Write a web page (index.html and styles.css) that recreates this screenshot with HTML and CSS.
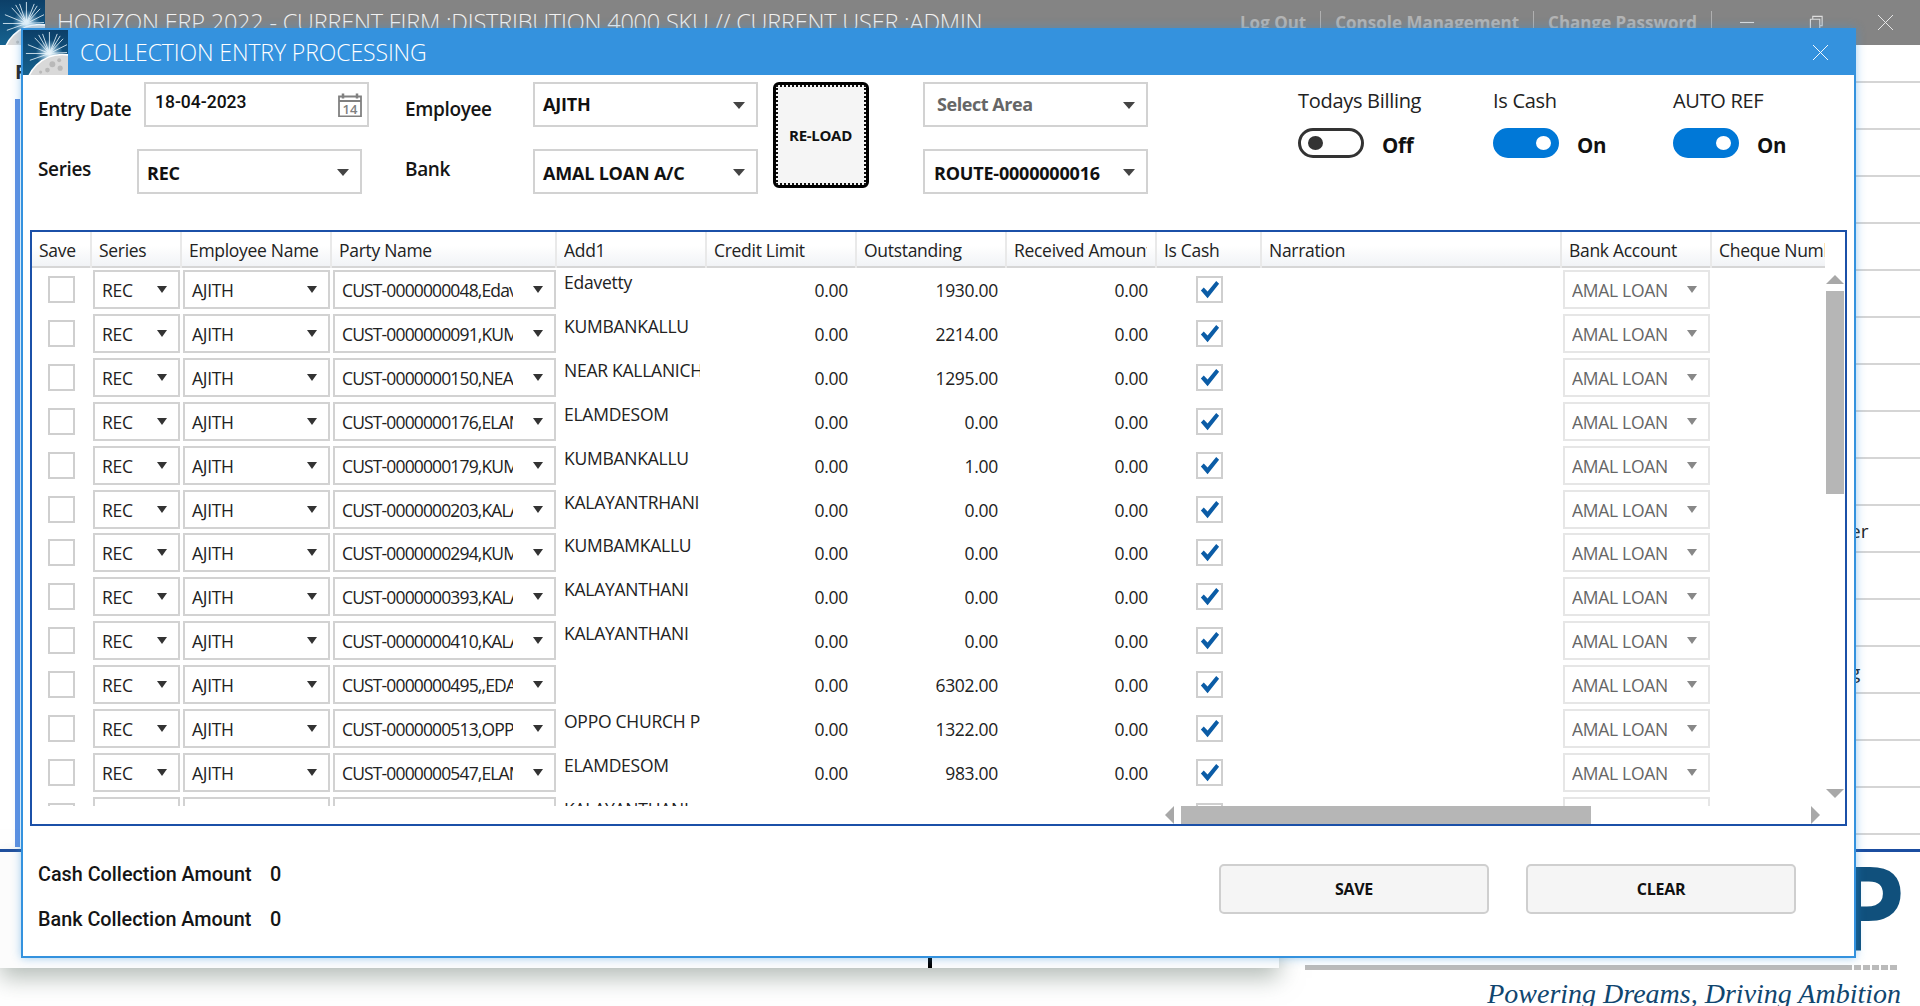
FILE: index.html
```html
<!DOCTYPE html>
<html lang="en">
<head>
<meta charset="utf-8">
<title>Collection Entry Processing</title>
<link rel="stylesheet" href="styles.css">
</head>
<body>
<svg class="sprite" width="0" height="0" aria-hidden="true">
  <defs>
    <linearGradient id="skyGrad" x1="0" y1="0" x2="0" y2="1"><stop offset="0" stop-color="#0c3f68"/><stop offset="1" stop-color="#16628f"/></linearGradient>
    <radialGradient id="glowGrad"><stop offset="0" stop-color="#fff"/><stop offset=".3" stop-color="#d6ecf8" stop-opacity=".85"/><stop offset="1" stop-color="#7fb9dc" stop-opacity="0"/></radialGradient>
    <symbol id="logo" viewBox="0 0 46 46">
      <rect width="46" height="46" fill="url(#skyGrad)"/>
      <circle cx="27" cy="24" r="14" fill="url(#glowGrad)"/>
      <g stroke="#e8f5fc" stroke-width=".9" opacity=".95">
        <path d="M27 24L27 2M27 24L20 4M27 24L35 4M27 24L12 8M27 24L41 9M27 24L5 15M27 24L45 15M27 24L3 24M27 24L45 23M27 24L7 31M27 24L16 5M27 24L38 6"/>
      </g>
      <circle cx="40" cy="62" r="37" fill="#d9d9d9" stroke="#fff" stroke-width="1.6"/>
      <g fill="#b9b9b9"><circle cx="30" cy="35" r="3"/><circle cx="37" cy="31" r="2"/><circle cx="25" cy="41" r="2.4"/><circle cx="38" cy="39" r="2.6"/><circle cx="18" cy="43" r="1.6"/></g>
    </symbol>
    <symbol id="tick" viewBox="0 0 24 24">
      <path d="M3 13l3-3 4 4 9-11 3 3-12 15z" fill="#0b5ca6"/>
    </symbol>
  </defs>
</svg>

<div class="desktop">
  <div class="backdrop">
    <header class="appbar">
      <svg class="appbar-logo"><use href="#logo"/></svg>
      <div class="appbar-title">HORIZON ERP 2022 - CURRENT FIRM :DISTRIBUTION 4000 SKU // CURRENT USER :ADMIN</div>
      <nav class="appbar-links">
        <span class="appbar-link">Log Out</span>
        <span class="appbar-link">Console Management</span>
        <span class="appbar-link">Change Password</span>
      </nav>
      <div class="winctl">
        <svg class="winctl-icon" viewBox="0 0 16 16"><path d="M0 8h15" stroke="#ddd" stroke-width="1.2" fill="none"/></svg>
        <svg class="winctl-icon" viewBox="0 0 16 16"><path d="M1.5 4.5h10v11h-10zM4 4.500V1.500h10v10h-2.500" stroke="#ddd" stroke-width="1.200" fill="none"/></svg>
        <svg class="winctl-icon" viewBox="0 0 16 16"><path d="M0 0l16 16M16 0L0 16" stroke="#eee" stroke-width="1" fill="none"/></svg>
      </div>
    </header>
    <div class="workspace">
      <div class="workspace-main">
        <div class="stub-letter">F</div>
        <div class="stub-panel"></div>
      </div>
      <ul class="sidelist">
        <li></li><li></li><li></li><li></li><li></li><li></li><li></li><li></li><li></li><li></li>
        <li class="sidelist-text">er</li><li></li><li></li><li class="sidelist-text">g</li><li></li><li></li><li></li>
      </ul>
    </div>
    <div class="bottom">
      <div class="bottom-panel"><span class="bottom-tick"></span></div>
      <div class="brand">
        <div class="brand-letter">P</div>
        <div class="brand-rule"></div>
        <div class="brand-tag">Powering Dreams, Driving Ambition</div>
      </div>
    </div>
  </div>

  <section class="dialog">
    <header class="dialog-title">
      <svg class="dialog-logo"><use href="#logo"/></svg>
      <h1 class="dialog-heading">COLLECTION ENTRY PROCESSING</h1>
      <svg class="dialog-close" viewBox="0 0 16 16"><path d="M0 0l16 16M16 0L0 16" stroke="#fff" stroke-width="1" fill="none"/></svg>
    </header>

    <div class="form">
      <div class="fcol fcol-a">
        <div class="frow">
          <label class="flabel flabel-low flabel-date">Entry Date</label>
          <div class="field field-date">
            <span class="date-text">18-04-2023</span>
            <svg class="cal" viewBox="0 0 24 24">
              <path d="M1 4h22v20H1zM1 8.500h22" fill="none" stroke="#808080" stroke-width="1.800"/>
              <path d="M5 1v5M19 1v5" stroke="#808080" stroke-width="2.500"/>
              <text class="cal-num" x="12" y="21.500" text-anchor="middle">14</text>
            </svg>
          </div>
        </div>
        <div class="frow">
          <label class="flabel flabel-high flabel-series">Series</label>
          <div class="field field-combo">REC</div>
        </div>
      </div>
      <div class="fcol fcol-b">
        <div class="frow">
          <label class="flabel flabel-low flabel-wide">Employee</label>
          <div class="field field-combo field-raised">AJITH</div>
        </div>
        <div class="frow">
          <label class="flabel flabel-high flabel-wide">Bank</label>
          <div class="field field-combo">AMAL LOAN A/C</div>
        </div>
      </div>
      <button class="reload" type="button"><span class="reload-inner">RE-LOAD</span></button>
      <div class="fcol fcol-d">
        <div class="field field-combo field-raised field-muted">Select Area</div>
        <div class="field field-combo field-tight">ROUTE-0000000016</div>
      </div>
      <div class="switch switch-a">
        <div class="switch-label">Todays Billing</div>
        <div class="switch-line"><span class="toggle"></span><span class="switch-state">Off</span></div>
      </div>
      <div class="switch switch-b">
        <div class="switch-label">Is Cash</div>
        <div class="switch-line"><span class="toggle toggle-on"></span><span class="switch-state">On</span></div>
      </div>
      <div class="switch">
        <div class="switch-label">AUTO REF</div>
        <div class="switch-line"><span class="toggle toggle-on"></span><span class="switch-state">On</span></div>
      </div>
    </div>

    <div class="grid">
      <div class="gcols ghead">
        <div class="gh">Save</div><div class="gh">Series</div><div class="gh">Employee Name</div><div class="gh">Party Name</div><div class="gh">Add1</div><div class="gh">Credit Limit</div><div class="gh">Outstanding</div><div class="gh">Received Amount</div><div class="gh">Is Cash</div><div class="gh">Narration</div><div class="gh">Bank Account</div><div class="gh">Cheque Number</div>
      </div>
      <div class="gbody">
        <div class="gcols grow"><div class="gc"><span class="box"></span></div><div class="gc"><div class="cb">REC</div></div><div class="gc"><div class="cb">AJITH</div></div><div class="gc"><div class="cb"><span class="cb-clip">CUST-0000000048,Edavetty</span></div></div><div class="gc gc-add">Edavetty</div><div class="gc gc-num">0.00</div><div class="gc gc-num">1930.00</div><div class="gc gc-num">0.00</div><div class="gc"><span class="box box-cash"><svg class="tick"><use href="#tick"/></svg></span></div><div class="gc"></div><div class="gc"><div class="cb cb-off"><span class="cb-fade">AMAL LOAN A/C</span></div></div><div class="gc"></div></div>
        <div class="gcols grow"><div class="gc"><span class="box"></span></div><div class="gc"><div class="cb">REC</div></div><div class="gc"><div class="cb">AJITH</div></div><div class="gc"><div class="cb"><span class="cb-clip">CUST-0000000091,KUMBANKALLU</span></div></div><div class="gc gc-add">KUMBANKALLU</div><div class="gc gc-num">0.00</div><div class="gc gc-num">2214.00</div><div class="gc gc-num">0.00</div><div class="gc"><span class="box box-cash"><svg class="tick"><use href="#tick"/></svg></span></div><div class="gc"></div><div class="gc"><div class="cb cb-off"><span class="cb-fade">AMAL LOAN A/C</span></div></div><div class="gc"></div></div>
        <div class="gcols grow"><div class="gc"><span class="box"></span></div><div class="gc"><div class="cb">REC</div></div><div class="gc"><div class="cb">AJITH</div></div><div class="gc"><div class="cb"><span class="cb-clip">CUST-0000000150,NEAR KALLANICHIRA</span></div></div><div class="gc gc-add">NEAR KALLANICHIRA</div><div class="gc gc-num">0.00</div><div class="gc gc-num">1295.00</div><div class="gc gc-num">0.00</div><div class="gc"><span class="box box-cash"><svg class="tick"><use href="#tick"/></svg></span></div><div class="gc"></div><div class="gc"><div class="cb cb-off"><span class="cb-fade">AMAL LOAN A/C</span></div></div><div class="gc"></div></div>
        <div class="gcols grow"><div class="gc"><span class="box"></span></div><div class="gc"><div class="cb">REC</div></div><div class="gc"><div class="cb">AJITH</div></div><div class="gc"><div class="cb"><span class="cb-clip">CUST-0000000176,ELAMDESOM</span></div></div><div class="gc gc-add">ELAMDESOM</div><div class="gc gc-num">0.00</div><div class="gc gc-num">0.00</div><div class="gc gc-num">0.00</div><div class="gc"><span class="box box-cash"><svg class="tick"><use href="#tick"/></svg></span></div><div class="gc"></div><div class="gc"><div class="cb cb-off"><span class="cb-fade">AMAL LOAN A/C</span></div></div><div class="gc"></div></div>
        <div class="gcols grow"><div class="gc"><span class="box"></span></div><div class="gc"><div class="cb">REC</div></div><div class="gc"><div class="cb">AJITH</div></div><div class="gc"><div class="cb"><span class="cb-clip">CUST-0000000179,KUMBANKALLU</span></div></div><div class="gc gc-add">KUMBANKALLU</div><div class="gc gc-num">0.00</div><div class="gc gc-num">1.00</div><div class="gc gc-num">0.00</div><div class="gc"><span class="box box-cash"><svg class="tick"><use href="#tick"/></svg></span></div><div class="gc"></div><div class="gc"><div class="cb cb-off"><span class="cb-fade">AMAL LOAN A/C</span></div></div><div class="gc"></div></div>
        <div class="gcols grow"><div class="gc"><span class="box"></span></div><div class="gc"><div class="cb">REC</div></div><div class="gc"><div class="cb">AJITH</div></div><div class="gc"><div class="cb"><span class="cb-clip">CUST-0000000203,KALAYANTRHANI</span></div></div><div class="gc gc-add">KALAYANTRHANI</div><div class="gc gc-num">0.00</div><div class="gc gc-num">0.00</div><div class="gc gc-num">0.00</div><div class="gc"><span class="box box-cash"><svg class="tick"><use href="#tick"/></svg></span></div><div class="gc"></div><div class="gc"><div class="cb cb-off"><span class="cb-fade">AMAL LOAN A/C</span></div></div><div class="gc"></div></div>
        <div class="gcols grow"><div class="gc"><span class="box"></span></div><div class="gc"><div class="cb">REC</div></div><div class="gc"><div class="cb">AJITH</div></div><div class="gc"><div class="cb"><span class="cb-clip">CUST-0000000294,KUMBAMKALLU</span></div></div><div class="gc gc-add">KUMBAMKALLU</div><div class="gc gc-num">0.00</div><div class="gc gc-num">0.00</div><div class="gc gc-num">0.00</div><div class="gc"><span class="box box-cash"><svg class="tick"><use href="#tick"/></svg></span></div><div class="gc"></div><div class="gc"><div class="cb cb-off"><span class="cb-fade">AMAL LOAN A/C</span></div></div><div class="gc"></div></div>
        <div class="gcols grow"><div class="gc"><span class="box"></span></div><div class="gc"><div class="cb">REC</div></div><div class="gc"><div class="cb">AJITH</div></div><div class="gc"><div class="cb"><span class="cb-clip">CUST-0000000393,KALAYANTHANI</span></div></div><div class="gc gc-add">KALAYANTHANI</div><div class="gc gc-num">0.00</div><div class="gc gc-num">0.00</div><div class="gc gc-num">0.00</div><div class="gc"><span class="box box-cash"><svg class="tick"><use href="#tick"/></svg></span></div><div class="gc"></div><div class="gc"><div class="cb cb-off"><span class="cb-fade">AMAL LOAN A/C</span></div></div><div class="gc"></div></div>
        <div class="gcols grow"><div class="gc"><span class="box"></span></div><div class="gc"><div class="cb">REC</div></div><div class="gc"><div class="cb">AJITH</div></div><div class="gc"><div class="cb"><span class="cb-clip">CUST-0000000410,KALAYANTHANI</span></div></div><div class="gc gc-add">KALAYANTHANI</div><div class="gc gc-num">0.00</div><div class="gc gc-num">0.00</div><div class="gc gc-num">0.00</div><div class="gc"><span class="box box-cash"><svg class="tick"><use href="#tick"/></svg></span></div><div class="gc"></div><div class="gc"><div class="cb cb-off"><span class="cb-fade">AMAL LOAN A/C</span></div></div><div class="gc"></div></div>
        <div class="gcols grow"><div class="gc"><span class="box"></span></div><div class="gc"><div class="cb">REC</div></div><div class="gc"><div class="cb">AJITH</div></div><div class="gc"><div class="cb"><span class="cb-clip">CUST-0000000495,,EDAVETTY</span></div></div><div class="gc gc-add"></div><div class="gc gc-num">0.00</div><div class="gc gc-num">6302.00</div><div class="gc gc-num">0.00</div><div class="gc"><span class="box box-cash"><svg class="tick"><use href="#tick"/></svg></span></div><div class="gc"></div><div class="gc"><div class="cb cb-off"><span class="cb-fade">AMAL LOAN A/C</span></div></div><div class="gc"></div></div>
        <div class="gcols grow"><div class="gc"><span class="box"></span></div><div class="gc"><div class="cb">REC</div></div><div class="gc"><div class="cb">AJITH</div></div><div class="gc"><div class="cb"><span class="cb-clip">CUST-0000000513,OPPO CHURCH</span></div></div><div class="gc gc-add">OPPO CHURCH PARA</div><div class="gc gc-num">0.00</div><div class="gc gc-num">1322.00</div><div class="gc gc-num">0.00</div><div class="gc"><span class="box box-cash"><svg class="tick"><use href="#tick"/></svg></span></div><div class="gc"></div><div class="gc"><div class="cb cb-off"><span class="cb-fade">AMAL LOAN A/C</span></div></div><div class="gc"></div></div>
        <div class="gcols grow"><div class="gc"><span class="box"></span></div><div class="gc"><div class="cb">REC</div></div><div class="gc"><div class="cb">AJITH</div></div><div class="gc"><div class="cb"><span class="cb-clip">CUST-0000000547,ELAMDESOM</span></div></div><div class="gc gc-add">ELAMDESOM</div><div class="gc gc-num">0.00</div><div class="gc gc-num">983.00</div><div class="gc gc-num">0.00</div><div class="gc"><span class="box box-cash"><svg class="tick"><use href="#tick"/></svg></span></div><div class="gc"></div><div class="gc"><div class="cb cb-off"><span class="cb-fade">AMAL LOAN A/C</span></div></div><div class="gc"></div></div>
        <div class="gcols grow"><div class="gc"><span class="box"></span></div><div class="gc"><div class="cb"></div></div><div class="gc"><div class="cb"></div></div><div class="gc"><div class="cb"></div></div><div class="gc gc-add">KALAYANTHANI</div><div class="gc gc-num"></div><div class="gc gc-num"></div><div class="gc gc-num"></div><div class="gc"><span class="box box-cash"></span></div><div class="gc"></div><div class="gc"><div class="cb cb-off"></div></div><div class="gc"></div></div>
      </div>
      <div class="vscroll"><span class="arrow arrow-up"></span><span class="vthumb"></span><span class="arrow arrow-down"></span></div>
      <div class="hscroll"><span class="arrow arrow-left"></span><span class="hthumb"></span><span class="arrow arrow-right"></span></div>
    </div>

    <footer class="summary">
      <div class="totals">
        <div class="total"><span class="total-label">Cash Collection Amount</span><span class="total-value">0</span></div>
        <div class="total"><span class="total-label">Bank Collection Amount</span><span class="total-value">0</span></div>
      </div>
      <div class="actions">
        <button class="action" type="button">SAVE</button>
        <button class="action" type="button">CLEAR</button>
      </div>
    </footer>
  </section>
</div>
</body>
</html>
```
FILE: styles.css
```css
* { box-sizing: border-box; }
html, body { margin: 0; padding: 0; background: #fff; }
body { font-family: "Open Sans", "Noto Sans", sans-serif; color: #111; overflow: hidden; }
.sprite { position: absolute; }

.desktop { position: relative; width: 1920px; height: 1006px; overflow: hidden; background: #fff; }
.backdrop { display: flex; flex-direction: column; height: 1006px; }

/* background application */
.appbar { display: flex; height: 45px; background: #848484; flex: none; }
.appbar-logo { width: 45px; height: 45px; flex: none; }
.appbar-title { margin-left: 12px; width: 1100px; font-size: 23.5px; font-weight: 300; line-height: 44px; color: #f2f2f2; white-space: nowrap; letter-spacing: -.2px; }
.appbar-links { display: flex; margin-left: 69px; padding-top: 11px; }
.appbar-link { padding: 0 14px; height: 24px; line-height: 24px; font-size: 17px; font-weight: 700; color: #b4b4b4; border-right: 1px solid #b0b0b0; white-space: nowrap; }
.winctl { display: flex; flex: none; margin-left: auto; padding-top: 15px; padding-right: 27px; gap: 54px; }
.winctl-icon { width: 15px; height: 15px; }

.workspace { display: flex; flex: none; height: 807px; justify-content: space-between; border-bottom: 3px solid #1b4da0; }
.workspace-main { width: 22px; position: relative; padding-left: 15px; }
.stub-letter { height: 54px; padding-top: 17px; font-size: 20px; line-height: 20px; font-weight: 700; color: #222; }
.stub-panel { width: 5px; height: 748px; background: #5e90e2; }
.sidelist { list-style: none; margin: 0; padding: 0; width: 64px; margin-top: -9px; }
.sidelist li { height: 47px; border-bottom: 2px solid #d5d5d5; font-size: 19px; color: #222; padding: 13px 0 0 0; line-height: 24px; overflow: hidden; }
.sidelist-text { text-indent: -6px; }

.bottom { display: flex; flex: 1; }
.bottom-panel { width: 1279px; height: 116px; background: #fcfcfc; box-shadow: 0 10px 22px rgba(120,135,125,.55); position: relative; display: flex; justify-content: center; align-items: flex-end; padding-left: 581px; }
.bottom-tick { display: block; width: 4px; height: 10px; background: #000; }
.brand { flex: 1; position: relative; padding-left: 26px; color: #10507c; }
.brand-letter { position: absolute; left: 554px; top: -5px; font-family: "Open Sans", sans-serif; font-weight: 700; font-size: 116px; line-height: 118px; color: #10507c; }
.brand-rule { margin-top: 113px; width: 594px; height: 5px; background: linear-gradient(90deg, #bbb 0 91%, transparent 91%), repeating-linear-gradient(90deg, #bbb 0 7px, #fff 7px 9px); }
.brand-tag { margin-top: 9px; width: 596px; text-align: right; font-family: "Liberation Serif", serif; font-style: italic; font-size: 28px; line-height: 30px; color: #10466f; white-space: nowrap; }

/* dialog */
.dialog { position: absolute; left: 21px; top: 28px; width: 1835px; height: 930px; border: 2px solid #3492de; border-top-width: 0; background: #fff; box-shadow: 0 0 9px rgba(52,146,222,.45); display: flex; flex-direction: column; }
.dialog-title { height: 47px; flex: none; background: #3492de; display: flex; align-items: flex-end; position: relative; }
.dialog-logo { width: 45px; height: 45px; flex: none; }
.dialog-heading { margin: 0 0 0 12px; font-size: 23px; font-weight: 300; color: #fff; line-height: 45px; height: 45px; letter-spacing: -.1px; }
.dialog-close { width: 15px; height: 15px; margin-left: auto; margin-right: 26px; margin-bottom: 15px; }

.form { display: flex; flex: none; height: 155px; padding: 7px 0 0 15px; }
.fcol { display: flex; flex-direction: column; gap: 22px; flex: none; }
.fcol-a { width: 331px; }
.fcol-b { width: 367.5px; margin-left: 36px; }
.fcol-d { width: 225px; margin-left: 54.5px; }
.frow { display: flex; height: 45px; }
.flabel { display: block; flex: none; font-size: 19px; font-weight: 600; line-height: 24px; letter-spacing: -.35px; color: #151515; }
.flabel-low { margin-top: 15px; }
.flabel-high { margin-top: 8px; }
.flabel-date { width: 106px; }
.flabel-series { width: 99px; }
.flabel-wide { width: 128px; }
.field { position: relative; width: 225px; height: 45px; border: 2px solid #d2d2d2; background: #fff; }
.field-combo { font-size: 18px; font-weight: 700; letter-spacing: -.2px; line-height: 45px; padding-left: 8px; color: #111; white-space: nowrap; }
.field-combo::after { content: ""; position: absolute; right: 11px; top: 18px; border: 6px solid transparent; border-top: 7px solid #444; border-bottom-width: 0; }
.field-raised { line-height: 41px; }
.field-muted { color: #666; padding-left: 12px; letter-spacing: -.45px; }
.field-tight { padding-left: 9px; }
.date-text { position: absolute; left: 9px; top: 6px; font-family: Roboto, sans-serif; font-size: 17.5px; font-weight: 500; line-height: 24px; }
.cal { position: absolute; right: 5px; top: 8px; width: 24px; height: 25px; }
.cal-num { font-family: "Open Sans", sans-serif; font-size: 13px; font-weight: 600; fill: #808080; }

.reload { flex: none; width: 96px; height: 106px; padding: 0; border: 3px solid #000; border-radius: 6px; background: #f5f5f5; font-family: inherit; cursor: default; }
.reload-inner { display: flex; align-items: center; justify-content: center; height: 100%; border: 2px dotted #111; border-radius: 2px; font-size: 15px; font-weight: 700; letter-spacing: -.3px; color: #111; }

.switch { flex: none; padding-top: 5px; }
.switch-a { margin-left: 150px; width: 195px; }
.switch-b { width: 180px; }
.switch-label { font-size: 20px; line-height: 28px; letter-spacing: -.3px; color: #222; }
.switch-line { display: flex; align-items: center; margin-top: 13px; height: 30px; }
.toggle { position: relative; display: block; width: 66px; height: 30px; border: 3px solid #333; border-radius: 15px; background: #fff; }
.toggle::after { content: ""; position: absolute; left: 7px; top: 5px; width: 15px; height: 14px; border-radius: 50%; background: #333; }
.toggle-on { background: #0078d7; border-color: #0078d7; }
.toggle-on::after { left: 40px; background: #fff; }
.switch-state { margin-left: 18px; padding-top: 3px; font-size: 20.5px; font-weight: 700; letter-spacing: -.2px; color: #111; line-height: 30px; }

/* data grid */
.grid { position: relative; flex: none; width: 1817px; height: 596px; margin-left: 7px; border: 2px solid #1b50a8; overflow: hidden; background: #fff; }
.gcols { display: grid; grid-template-columns: 60px 90px 150px 225px 150px 150px 150px 150px 105px 300px 150px 113px; width: 1793px; }
.ghead { height: 36px; background: linear-gradient(#fff 0 40%, #f1f3f6 100%); border-bottom: 2px solid #d6d6d6; }
.gh { padding: 0 8px 0 7px; font-size: 17.5px; line-height: 36px; letter-spacing: -.3px; white-space: nowrap; overflow: clip; overflow-clip-margin: content-box; border-right: 2px solid #e9e9e9; color: #222; }
.gh:last-child { border-right: 0; padding-right: 0; }
.gbody { height: 538px; padding-top: 2px; overflow: hidden; }
.grow { height: 43.91px; }
.gc { position: relative; min-width: 0; font-size: 17.5px; letter-spacing: -.3px; color: #222; white-space: nowrap; }
.gc-add { padding: 0 7px 0 7px; line-height: 24px; letter-spacing: -.25px; overflow: clip; overflow-clip-margin: content-box; }
.gc-num { text-align: right; padding-right: 9px; line-height: 41px; }
.box { display: block; width: 27px; height: 27px; border: 2px solid #cfcfcf; margin: 6px 0 0 16px; background: #fff; }
.box-cash { margin-left: 39px; }
.tick { display: block; width: 23px; height: 23px; }
.cb { position: relative; height: 39px; margin: 0 2px 0 1px; border: 2px solid #d2d2d2; padding-left: 7px; line-height: 37px; overflow: hidden; }
.gc:nth-child(4) .cb { margin-right: 1px; }
.cb::after { content: ""; position: absolute; right: 11px; top: 14px; border: 5px solid transparent; border-top: 7px solid #333; border-bottom-width: 0; }
.cb-clip { display: block; width: 171px; overflow: hidden; letter-spacing: -.86px; }
.cb-off { border-color: #e6e6e6; color: #666; margin-left: 1px; margin-right: 2px; }
.cb-off::after { border-top-color: #888; }
.cb-fade { display: block; width: 95px; overflow: hidden; }

.vscroll { position: absolute; right: 1px; top: 43px; bottom: 26px; width: 18px; }
.vthumb { position: absolute; left: 0; top: 16px; width: 18px; height: 203px; background: #b6b6b6; }
.hscroll { position: absolute; left: 1133px; bottom: 0; width: 655px; height: 18px; }
.hthumb { position: absolute; left: 16px; top: 0; width: 410px; height: 18px; background: #b6b6b6; }
.arrow { position: absolute; width: 0; height: 0; border: 0 solid transparent; }
.arrow-up { left: 0; top: 0; border-width: 0 9px 9px; border-bottom-color: #a8a8a8; }
.arrow-down { left: 0; bottom: 0; border-width: 9px 9px 0; border-top-color: #a8a8a8; }
.arrow-left { left: 0; top: 0; border-width: 9px 9px 9px 0; border-right-color: #a8a8a8; }
.arrow-right { right: 0; top: 0; border-width: 9px 0 9px 9px; border-left-color: #a8a8a8; }

/* summary */
.summary { display: flex; flex: 1; padding-left: 15px; justify-content: space-between; }
.totals { padding-top: 36px; }
.total { display: flex; height: 45px; line-height: 26px; font-family: Roboto, sans-serif; font-size: 19.8px; font-weight: 500; color: #151515; }
.total-label { width: 232px; white-space: nowrap; }
.actions { display: flex; gap: 37px; padding: 38px 58px 0 0; }
.action { width: 270px; height: 50px; border: 2px solid #cfcfcf; border-radius: 5px; background: #f5f5f5; font-family: inherit; font-size: 16px; font-weight: 700; letter-spacing: -.3px; color: #111; }
```
